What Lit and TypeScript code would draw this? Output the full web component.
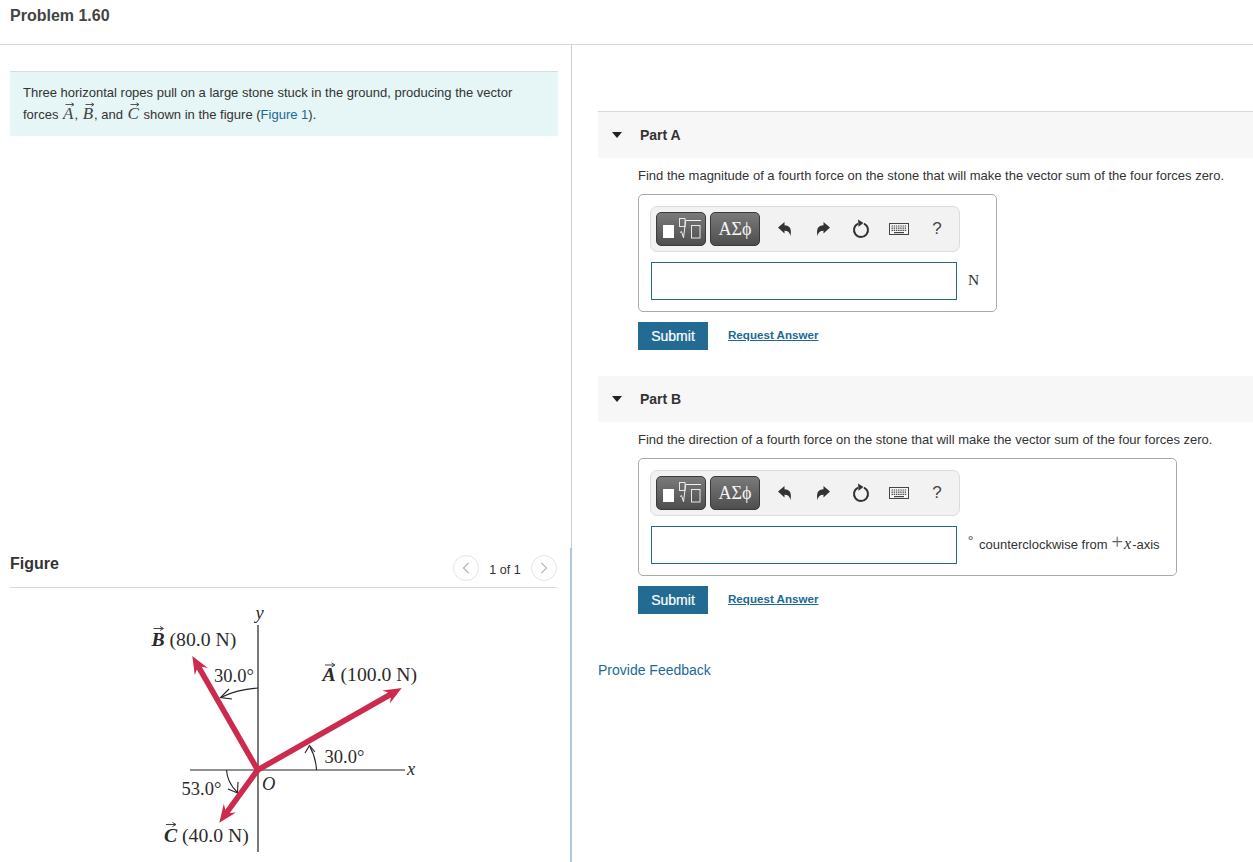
import { LitElement, html, css, svg } from "lit";
import { customElement } from "lit/decorators.js";

const SANS = css`"Liberation Sans", Arial, sans-serif`;
const SERIF = css`"Liberation Serif", "Times New Roman", serif`;

const vec = (letter: string) => html`<span class="vec"
  ><svg class="vec-arrow" width="10" height="5" viewBox="0 0 10 5">
    <path d="M0.5 2.5H8.5M6.5 0.8L9 2.5L6.5 4.2" fill="none" stroke="#444" stroke-width="0.9" /></svg
  >${letter}</span
>`;

@customElement("answer-toolbar")
class AnswerToolbar extends LitElement {
  static styles = css`
    :host {
      display: flex;
      align-items: center;
      width: 310px;
      height: 46px;
      box-sizing: border-box;
      padding-left: 5px;
      background: #f2f2f2;
      border: 1px solid #dcdcdc;
      border-radius: 7px;
    }
    .tpl {
      display: flex;
      align-items: center;
      justify-content: center;
      width: 50px;
      height: 34px;
      box-sizing: border-box;
      margin-right: 4px;
      border: 1px solid #3a3a3a;
      border-radius: 5px;
      background: linear-gradient(#7a7a7a, #4e4e4e);
      color: #f4f4f4;
      font: 18px ${SERIF};
    }
    .tool {
      display: flex;
      align-items: center;
      justify-content: center;
      width: 38px;
      height: 34px;
      color: #333;
    }
    .undo {
      margin-left: 2px;
    }
    .help {
      font: 17px ${SANS};
      color: #444;
    }
  `;

  render() {
    return html`
      <div class="tpl">
        <svg width="46" height="30" viewBox="0 0 46 30">
          <rect x="5" y="11" width="11" height="13" fill="#fff" />
          <rect x="21.5" y="4.5" width="5.5" height="8" fill="none" stroke="#e8e8e8" />
          <path d="M22 18.5L23.5 17.5L25.5 23.7L27.7 6.5H43" fill="none" stroke="#f0f0f0" />
          <rect x="33.5" y="11.5" width="8.5" height="12.5" fill="none" stroke="#e8e8e8" />
        </svg>
      </div>
      <div class="tpl">ΑΣϕ</div>
      <div class="tool undo">
        <svg width="16" height="16" viewBox="0 0 16 16">
          <path d="M1 6.5L7.5 1V4.3C12.5 4.3 15 7.6 13.5 15C12.8 11.5 11 9.8 7.5 9.8V12.5Z" fill="#333" />
        </svg>
      </div>
      <div class="tool">
        <svg width="16" height="16" viewBox="0 0 16 16">
          <path d="M15 6.5L8.5 1V4.3C3.5 4.3 1 7.6 2.5 15C3.2 11.5 5 9.8 8.5 9.8V12.5Z" fill="#333" />
        </svg>
      </div>
      <div class="tool">
        <svg width="20" height="20" viewBox="0 0 20 20">
          <path d="M13 4.6A7 7 0 1 1 7 4.6" fill="none" stroke="#333" stroke-width="2" />
          <path d="M7 0.6L12.5 4L7.5 7.8Z" fill="#333" />
        </svg>
      </div>
      <div class="tool">
        <svg width="20" height="12" viewBox="0 0 20 12">
          <rect x="0.5" y="0.5" width="19" height="11" fill="#f6f6f6" stroke="#444" />
          <path d="M2.5 3H17.5M2.5 5.2H17.5M2.5 7.4H17.5" stroke="#444" stroke-width="1.2" stroke-dasharray="1.4 0.8" />
          <path d="M5 9.6H15" stroke="#444" stroke-width="1.2" />
        </svg>
      </div>
      <div class="tool help">?</div>
    `;
  }
}

@customElement("force-diagram")
class ForceDiagram extends LitElement {
  static styles = css`
    :host {
      display: block;
      margin: 7px 0 0 120px;
      width: 300px;
      height: 267px;
    }
    svg {
      display: block;
    }
    text {
      font: 18.5px ${SERIF};
      fill: #2b2b2b;
    }
    .label {
      font-size: 19.7px;
    }
    .name {
      font-weight: bold;
      font-style: italic;
    }
    .axis {
      font-style: italic;
    }
  `;

  // arrow from the origin with a barbed head, angle taken from its tip
  private arrow(tx: number, ty: number) {
    const ox = 127.7;
    const oy = 175;
    const w = 2.8;
    const a = Math.atan2(ty - oy, tx - ox);
    const pt = (back: number, side: number) => {
      const x = tx - back * Math.cos(a) - side * Math.sin(a);
      const y = ty - back * Math.sin(a) + side * Math.cos(a);
      return `${x.toFixed(1)},${y.toFixed(1)}`;
    };
    return svg`
      <polygon fill="#cc2b4e" points="${ox - w * Math.sin(a)},${oy + w * Math.cos(a)} ${pt(14, w)} ${pt(18, 7.5)} ${tx},${ty} ${pt(18, -7.5)} ${pt(14, -w)} ${ox + w * Math.sin(a)},${oy - w * Math.cos(a)}" />
    `;
  }

  private vecLine(x: number, y: number) {
    return svg`<path d="M${x} ${y}H${x + 9}M${x + 6.5} ${y - 2}L${x + 10} ${y}L${x + 6.5} ${y + 2}" fill="none" stroke="#2b2b2b" stroke-width="0.9" />`;
  }

  render() {
    return html`
      <svg width="300" height="267" viewBox="0 0 300 267">
        <path d="M128 30V257M60 175H275" stroke="#222" stroke-width="1.2" fill="none" />
        <path d="M128 93C113 94 102 97 92 102" fill="none" stroke="#222" stroke-width="1.1" />
        <path d="M99 94L90.5 102.5L102 104" fill="none" stroke="#222" stroke-width="1.1" />
        <path d="M186.5 175C186 166 184 159 180 152" fill="none" stroke="#222" stroke-width="1.1" />
        <path d="M175 158L179.5 150.5L185 157" fill="none" stroke="#222" stroke-width="1.1" />
        <path d="M96.5 175C97 184 101 191 107 197" fill="none" stroke="#222" stroke-width="1.1" />
        <path d="M108 187L107.5 198L98 194" fill="none" stroke="#222" stroke-width="1.1" />
        ${this.arrow(271.7, 93)} ${this.arrow(62.3, 61)} ${this.arrow(89.3, 227.7)}
        <text class="axis" x="125.5" y="24">y</text>
        <text class="axis" x="277" y="180">x</text>
        <text class="axis" x="132" y="195">O</text>
        <text x="84" y="87">30.0°</text>
        <text x="194.5" y="168">30.0°</text>
        <text x="51.5" y="200">53.0°</text>
        <text class="label" x="21.5" y="51"><tspan class="name">B</tspan> (80.0 N)</text>
        <text class="label" x="192.5" y="85.5"><tspan class="name">A</tspan> (100.0 N)</text>
        <text class="label" x="34" y="246.5"><tspan class="name">C</tspan> (40.0 N)</text>
        ${this.vecLine(23.5, 33.5)} ${this.vecLine(195, 70)} ${this.vecLine(36, 229.5)}
      </svg>
    `;
  }
}

@customElement("app-root")
export class AppRoot extends LitElement {
  static styles = css`
    :host {
      display: block;
      height: 862px;
      overflow: hidden;
      background: #fff;
      color: #333;
      font: 13px/18px ${SANS};
    }
    a {
      color: #1c6a94;
      text-decoration: none;
    }
    .header {
      height: 45px;
      box-sizing: border-box;
      padding: 6px 10px 0;
      border-bottom: 1px solid #d9d9d9;
      font-size: 16px;
      font-weight: bold;
      line-height: 20px;
      color: #444;
    }
    .page {
      display: grid;
      grid-template-columns: 572px 1fr;
      height: 817px;
    }
    .left {
      display: flex;
      flex-direction: column;
    }
    .intro-pane {
      height: 503px;
      box-sizing: border-box;
      padding: 26px 13px 0 10px;
      border-right: 1px solid #ccc;
    }
    .intro {
      height: 65px;
      box-sizing: border-box;
      padding: 10px 13px 0;
      background: #e6f5f5;
      border-top: 1px solid #d9dfdf;
      line-height: 22px;
    }
    .vec {
      position: relative;
      display: inline-block;
      font: italic 17px/17px ${SERIF};
      color: #444;
      margin: 0 1px;
    }
    .vec-arrow {
      position: absolute;
      left: 2px;
      top: -3px;
    }
    .figure-pane {
      flex: 1;
      box-sizing: border-box;
      padding: 7px 13px 0 10px;
      border-right: 2px solid #b4c7e0;
    }
    .figure-head {
      display: flex;
      align-items: center;
      height: 33px;
      box-sizing: border-box;
      padding-bottom: 6px;
      border-bottom: 1px solid #d9d9d9;
    }
    .figure-title {
      flex: 1;
      align-self: flex-start;
      font-size: 16px;
      font-weight: bold;
      color: #333;
    }
    .pager-btn {
      display: flex;
      align-items: center;
      justify-content: center;
      width: 26px;
      height: 26px;
      box-sizing: border-box;
      border: 1px solid #e4e4e4;
      border-radius: 50%;
    }
    .pager-count {
      width: 52px;
      text-align: center;
      font-size: 12.5px;
      padding-top: 4px;
    }
    .right {
      padding: 66px 0 0 26px;
    }
    .part-head {
      display: flex;
      align-items: center;
      height: 46px;
      box-sizing: border-box;
      background: #f7f7f7;
      padding-left: 14px;
      font-size: 14px;
      font-weight: bold;
      color: #333;
    }
    .part-first .part-head {
      height: 47px;
      border-top: 1px solid #d9d9d9;
    }
    .caret {
      width: 0;
      height: 0;
      margin-right: 18px;
      border-left: 5.5px solid transparent;
      border-right: 5.5px solid transparent;
      border-top: 6px solid #222;
    }
    .part-body {
      padding: 9px 0 26px 40px;
    }
    .answer {
      margin-top: 9px;
      height: 118px;
      box-sizing: border-box;
      padding: 11px;
      border: 1px solid #a9a9a9;
      border-radius: 5px;
    }
    .answer-row {
      display: flex;
      align-items: center;
      margin: 10px 0 0 1px;
    }
    .field {
      width: 306px;
      height: 38px;
      box-sizing: border-box;
      border: 1px solid #23688f;
      background: #fff;
    }
    .unit {
      margin-left: 11px;
      white-space: nowrap;
    }
    .unit-n {
      display: block;
      padding-bottom: 2px;
      font: 15.5px ${SERIF};
      color: #333;
    }
    .unit-text {
      display: block;
      padding-bottom: 3px;
    }
    .deg {
      display: inline-block;
      width: 11px;
      font: 13px/13px ${SERIF};
      vertical-align: 5px;
    }
    .plus {
      font: 21px/14px ${SERIF};
      color: #666;
      margin-right: 1px;
    }
    .math {
      font: italic 16px/14px ${SERIF};
      margin-right: 1px;
    }
    .actions {
      display: flex;
      align-items: center;
      gap: 20px;
      margin-top: 10px;
    }
    .submit {
      width: 70px;
      height: 28px;
      padding: 0;
      border: none;
      background: #236b93;
      color: #fff;
      font: 14px ${SANS};
      -webkit-text-stroke: 0.2px #fff;
    }
    .request {
      margin-bottom: 2px;
      font-size: 11.6px;
      font-weight: bold;
      text-decoration: underline;
    }
    .feedback {
      display: inline-block;
      margin-top: 21px;
      font-size: 14px;
    }
  `;

  private renderPart(cls: string, name: string, prompt: string, width: number, unit: unknown) {
    return html`
      <section class=${cls}>
        <div class="part-head"><span class="caret"></span>${name}</div>
        <div class="part-body">
          <div>${prompt}</div>
          <div class="answer" style="width:${width}px">
            <answer-toolbar></answer-toolbar>
            <div class="answer-row">
              <div class="field"></div>
              <div class="unit">${unit}</div>
            </div>
          </div>
          <div class="actions">
            <button class="submit">Submit</button>
            <a class="request" href="#">Request Answer</a>
          </div>
        </div>
      </section>
    `;
  }

  render() {
    return html`
      <div class="header">Problem 1.60</div>
      <div class="page">
        <div class="left">
          <div class="intro-pane">
            <div class="intro">
              Three horizontal ropes pull on a large stone stuck in the ground, producing the vector<br />
              forces ${vec("A")}, ${vec("B")}, and ${vec("C")} shown in the figure (<a href="#">Figure 1</a>).
            </div>
          </div>
          <div class="figure-pane">
            <div class="figure-head">
              <div class="figure-title">Figure</div>
              <div class="pager-btn">
                <svg width="8" height="12" viewBox="0 0 8 12"><path d="M6.5 1L1.5 6L6.5 11" fill="none" stroke="#bbb" stroke-width="1.3" /></svg>
              </div>
              <div class="pager-count">1 of 1</div>
              <div class="pager-btn">
                <svg width="8" height="12" viewBox="0 0 8 12"><path d="M1.5 1L6.5 6L1.5 11" fill="none" stroke="#bbb" stroke-width="1.3" /></svg>
              </div>
            </div>
            <force-diagram></force-diagram>
          </div>
        </div>
        <div class="right">
          ${this.renderPart(
            "part-first",
            "Part A",
            "Find the magnitude of a fourth force on the stone that will make the vector sum of the four forces zero.",
            359,
            html`<span class="unit-n">N</span>`,
          )}
          ${this.renderPart(
            "",
            "Part B",
            "Find the direction of a fourth force on the stone that will make the vector sum of the four forces zero.",
            539,
            html`<span class="unit-text"
              ><span class="deg">°</span>counterclockwise from <span class="plus">+</span><i class="math">x</i>-axis</span
            >`,
          )}
          <a class="feedback" href="#">Provide Feedback</a>
        </div>
      </div>
    `;
  }
}
